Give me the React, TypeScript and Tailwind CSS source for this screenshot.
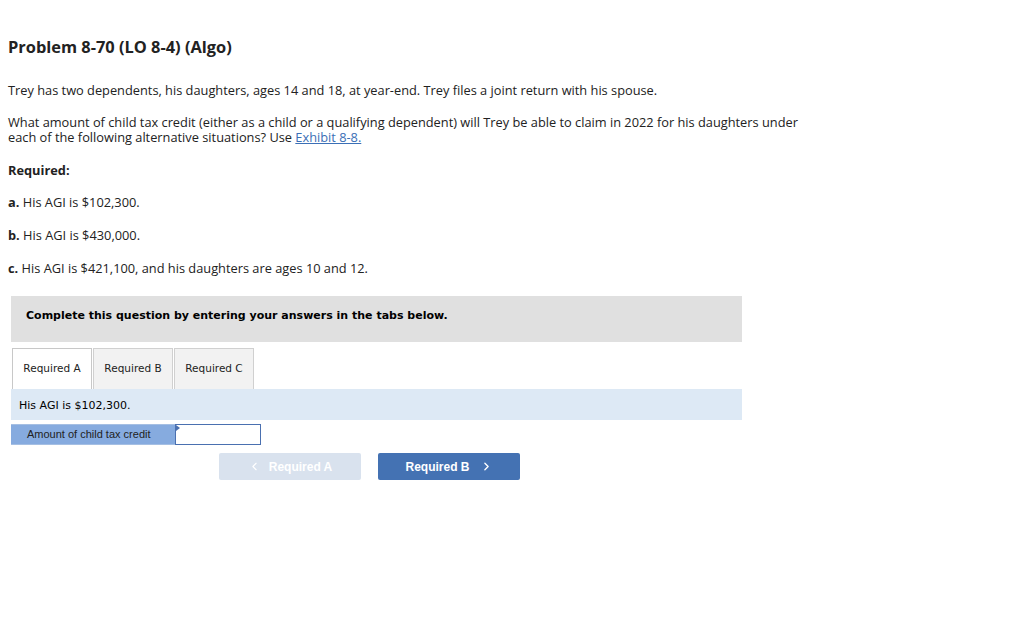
import React, { useState } from 'react';
import { ChevronLeft, ChevronRight } from 'lucide-react';

const tabs = ['Required A', 'Required B', 'Required C'];

const App: React.FC = () => {
  const [active] = useState(0);
  const [value, setValue] = useState('');

  return (
    <div className="min-h-screen bg-white text-[#222] font-['Open_Sans','Lato',sans-serif]">
      <div className="pl-2 pt-[36px]">
        <h1 className="text-[16.4px] font-bold leading-[22px]">Problem 8-70 (LO 8-4) (Algo)</h1>

        <p className="mt-[25px] text-[12.8px] leading-[15px]">
          Trey has two dependents, his daughters, ages 14 and 18, at year-end. Trey files a joint return with his spouse.
        </p>
        <p className="mt-[17px] text-[12.8px] leading-[15px] max-w-[800px]">
          What amount of child tax credit (either as a child or a qualifying dependent) will Trey be able to claim in 2022 for his daughters under each of the following alternative situations? Use{' '}
          <a href="#" className="text-[#3b6fb6] underline">Exhibit 8-8.</a>
        </p>

        <p className="mt-[18px] text-[12.8px] leading-[15px] font-bold">Required:</p>
        <p className="mt-[17px] text-[12.8px] leading-[15px]"><b>a.</b> His AGI is $102,300.</p>
        <p className="mt-[18px] text-[12.8px] leading-[15px]"><b>b.</b> His AGI is $430,000.</p>
        <p className="mt-[18px] text-[12.8px] leading-[15px]"><b>c.</b> His AGI is $421,100, and his daughters are ages 10 and 12.</p>
      </div>

      <div className="ml-[11px] mt-[20px] w-[731px] font-['DejaVu_Sans',Verdana,sans-serif]">
        <div className="h-[46px] bg-[#e0e0e0] flex items-center pl-[15px] pb-[5px] text-[11px] font-bold text-black">
          Complete this question by entering your answers in the tabs below.
        </div>

        <div className="mt-[6px] flex gap-[1px] pl-[1px]">
          {tabs.map((t, i) => (
            <div
              key={t}
              className={
                i === active
                  ? 'w-[80px] h-[41px] flex items-center justify-center text-[10.5px] bg-white border border-b-0 border-[#c8c8c8]'
                  : 'w-[80px] h-[41px] flex items-center justify-center text-[10.5px] bg-[#f2f2f2] border border-b-0 border-[#d0d0d0]'
              }
            >
              {t}
            </div>
          ))}
        </div>

        <div className="h-[31px] bg-[#dde9f5] flex items-center pl-[8px] pt-[3px] text-[11px] text-black">
          His AGI is $102,300.
        </div>

        <div className="mt-[4px] flex h-[21px]">
          <div className="w-[164px] bg-[#86abdf] flex items-center pl-[16px] text-[11px] text-[#222] font-['Liberation_Sans',Arial,sans-serif] border-y border-[#a5bfe3]">
            Amount of child tax credit
          </div>
          <div className="relative w-[86px] h-[21px]">
            <input
              value={value}
              onChange={(e) => setValue(e.target.value)}
              className="block w-full h-full border border-[#4a70b0] bg-white outline-none px-1 text-[11px]"
            />
            <span className="absolute left-[1px] top-[1px] w-0 h-0 border-y-[3px] border-l-[4px] border-y-transparent border-l-[#4a70b0]" />
          </div>
        </div>

        <div className="mt-[8px] flex gap-[17px] pl-[208px] font-['Liberation_Sans',Arial,sans-serif]">
          <button className="w-[142px] h-[27px] rounded-[2px] bg-[#d9e2ee] text-white text-[12px] font-bold flex items-center justify-center gap-[8px]">
            <ChevronLeft size={13} strokeWidth={2} />
            <span>Required A</span>
          </button>
          <button className="w-[142px] h-[27px] rounded-[2px] bg-[#4472b3] text-white text-[12px] font-bold flex items-center justify-center gap-[10px]">
            <span>Required B</span>
            <ChevronRight size={13} strokeWidth={2.5} />
          </button>
        </div>
      </div>
    </div>
  );
};

export default App;
